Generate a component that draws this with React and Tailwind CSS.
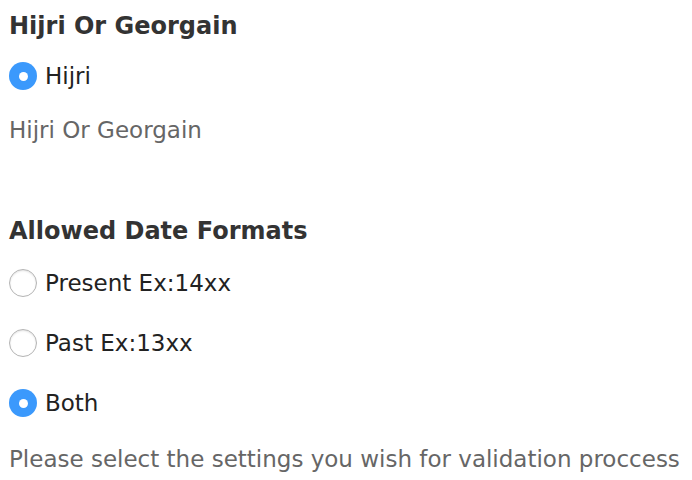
import { useState } from "react";

const Radio = ({ checked, label, onChange }) => (
    <label className="flex items-center h-[30px] gap-[8px] cursor-pointer">
        <span
            onClick={onChange}
            className={
                checked
                    ? "w-[28px] h-[28px] rounded-full bg-[#3b99fc] flex items-center justify-center shrink-0"
                    : "w-[28px] h-[28px] rounded-full bg-white border border-[#b4b4b4] shadow-[inset_0_1px_2px_rgba(0,0,0,0.12)] shrink-0"
            }
        >
            {checked && <span className="w-[9px] h-[9px] rounded-full bg-white"></span>}
        </span>
        <span className="text-[23px] leading-[30px] text-[#222]">{label}</span>
    </label>
);

export default function App() {
    const [calendar, setCalendar] = useState("hijri");
    const [format, setFormat] = useState("both");

    return (
        <div className="w-[692px] h-[480px] bg-white px-[9px] font-['DejaVu_Sans',sans-serif] overflow-hidden">
            {/* Calendar type */}
            <h2 className="pt-[10px] text-[24px] font-bold text-[#333] leading-[32px]">Hijri Or Georgain</h2>
            <div className="mt-[19px]">
                <Radio checked={calendar === "hijri"} label="Hijri" onChange={() => setCalendar("hijri")} />
            </div>
            <p className="mt-[24px] text-[23px] leading-[30px] text-[#666]">Hijri Or Georgain</p>

            {/* Date formats */}
            <h2 className="mt-[70px] text-[24px] font-bold text-[#333] leading-[32px]">Allowed Date Formats</h2>
            <div className="mt-[21px] flex flex-col gap-[30px]">
                <Radio checked={format === "present"} label="Present Ex:14xx" onChange={() => setFormat("present")} />
                <Radio checked={format === "past"} label="Past Ex:13xx" onChange={() => setFormat("past")} />
                <Radio checked={format === "both"} label="Both" onChange={() => setFormat("both")} />
            </div>
            <p className="mt-[26px] text-[23px] leading-[30px] text-[#666] whitespace-nowrap">
                Please select the settings you wish for validation proccess
            </p>
        </div>
    );
}
